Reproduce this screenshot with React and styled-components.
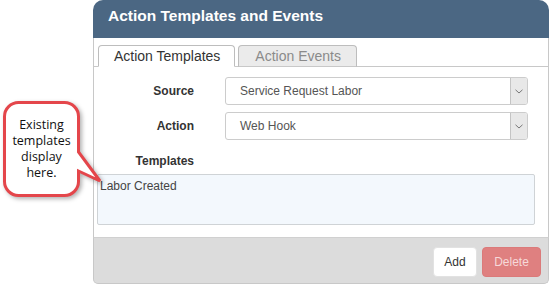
import React from "react";
import styled, { createGlobalStyle } from "styled-components";

const Global = createGlobalStyle`
  html, body { margin: 0; padding: 0; background: #ffffff; }
  body { font-family: "Liberation Sans", Arial, sans-serif; }
  * { box-sizing: border-box; }
`;

const Page = styled.div`
  position: relative;
  width: 550px;
  height: 285px;
  display: flex;
  padding-left: 93px;
  overflow: hidden;
`;

const Panel = styled.div`
  width: 456px;
  height: 284px;
  display: flex;
  flex-direction: column;
`;

const Header = styled.div`
  height: 38px;
  background: #4b6783;
  border-radius: 10px 10px 0 0;
  padding: 6px 0 0 15px;
  color: #ffffff;
  font-weight: bold;
  font-size: 15.5px;
  line-height: 20px;
`;

const Body = styled.div`
  background: #ffffff;
  border-left: 1px solid #c8c8c8;
  border-right: 1px solid #c8c8c8;
  padding-bottom: 12px;
`;

const TabRow = styled.div`
  display: flex;
  align-items: flex-end;
  gap: 3px;
  padding: 7px 0 0 4px;
  border-bottom: 1px solid #c8c8c8;
`;

const Tab = styled.div`
  height: 22px;
  margin-bottom: -1px;
  border: 1px solid #bdbdbd;
  border-bottom-color: ${(p) => (p.$active ? "#ffffff" : "#c8c8c8")};
  border-radius: 4px 4px 0 0;
  background: ${(p) => (p.$active ? "#ffffff" : "#ebebeb")};
  color: ${(p) => (p.$active ? "#333333" : "#8a8a8a")};
  font-size: 14px;
  line-height: 20px;
  padding-left: ${(p) => (p.$active ? "15px" : "16px")};
  padding-right: ${(p) => (p.$active ? "14px" : "15px")};
`;

const Form = styled.div`
  display: flex;
  flex-direction: column;
  gap: 7px;
  padding-top: 10px;
`;

const Row = styled.div`
  display: flex;
  align-items: center;
  gap: 31px;
`;

const Label = styled.div`
  width: 100px;
  text-align: right;
  font-weight: bold;
  font-size: 12px;
  color: #333333;
  line-height: 18px;
`;

const Select = styled.div`
  width: 303px;
  height: 28px;
  display: flex;
  align-items: stretch;
  border: 1px solid #cccccc;
  border-radius: 3px;
  background: #ffffff;
`;

const SelectValue = styled.div`
  flex: 1;
  padding-left: 14px;
  font-size: 12px;
  color: #555555;
  line-height: 26px;
`;

const Arrow = styled.div`
  width: 17px;
  display: flex;
  align-items: center;
  justify-content: center;
  background: #e8e8e8;
  border-left: 1px solid #c4c4c4;
  border-radius: 0 2px 2px 0;
`;

const TemplatesBlock = styled.div`
  display: flex;
  flex-direction: column;
  gap: 4px;
  margin-top: 12px;
`;

const TextArea = styled.div`
  margin-left: 3px;
  width: 438px;
  height: 51px;
  background: #f3f8fd;
  border: 1px solid #cfd3d6;
  border-radius: 2px;
  padding: 3px 2px;
  font-size: 12px;
  color: #444444;
  line-height: 16px;
`;

const Footer = styled.div`
  flex: 1;
  display: flex;
  justify-content: flex-end;
  align-items: flex-start;
  gap: 5px;
  padding: 9px 7px 0 0;
  background: #dcdcdc;
  border: 1px solid #c8c8c8;
  border-top: 1px solid #d0d0d0;
  border-radius: 0 0 5px 5px;
`;

const Button = styled.div`
  width: ${(p) => p.$w}px;
  height: 30px;
  display: flex;
  align-items: center;
  justify-content: center;
  border-radius: 4px;
  font-size: 12px;
  background: ${(p) => (p.$danger ? "#df8080" : "#ffffff")};
  color: ${(p) => (p.$danger ? "#f6d9d9" : "#333333")};
  border: 1px solid ${(p) => (p.$danger ? "#db7a7a" : "#e2e2e2")};
`;

const Callout = styled.div`
  position: absolute;
  left: 0;
  top: 0;
  width: 110px;
  height: 210px;
`;

const CalloutShape = styled.svg`
  position: absolute;
  left: 0;
  top: 0;
  filter: drop-shadow(2px 2px 2px rgba(0, 0, 0, 0.3));
`;

const CalloutText = styled.div`
  position: absolute;
  left: 4px;
  top: 102px;
  width: 75px;
  height: 94px;
  display: flex;
  align-items: center;
  justify-content: center;
  text-align: center;
  font-family: "Open Sans", "Noto Sans", sans-serif;
  font-size: 12.5px;
  line-height: 16px;
  color: #111111;
`;

const Chevron = () => (
  <svg width="8" height="5" viewBox="0 0 8 5">
    <path d="M0.5 0.8 L4 4 L7.5 0.8" fill="none" stroke="#777" strokeWidth="1" />
  </svg>
);

export default function App() {
  return (
    <>
      <Global />
      <Page>
        <Panel>
          <Header>Action Templates and Events</Header>
          <Body>
            <TabRow>
              <Tab $active>Action Templates</Tab>
              <Tab>Action Events</Tab>
            </TabRow>
            <Form>
              <Row>
                <Label>Source</Label>
                <Select>
                  <SelectValue>Service Request Labor</SelectValue>
                  <Arrow>
                    <Chevron />
                  </Arrow>
                </Select>
              </Row>
              <Row>
                <Label>Action</Label>
                <Select>
                  <SelectValue>Web Hook</SelectValue>
                  <Arrow>
                    <Chevron />
                  </Arrow>
                </Select>
              </Row>
            </Form>
            <TemplatesBlock>
              <Label>Templates</Label>
              <TextArea>Labor Created</TextArea>
            </TemplatesBlock>
          </Body>
          <Footer>
            <Button $w={44}>Add</Button>
            <Button $w={59} $danger>
              Delete
            </Button>
          </Footer>
        </Panel>
        <Callout>
          <CalloutShape width="110" height="210" viewBox="0 0 110 210">
            <path
              d="M18.5 102.5 H64.5 A14 14 0 0 1 78.5 116.5 V152 L100 181 L78.5 171 V181.5 A14 14 0 0 1 64.5 195.5 H18.5 A14 14 0 0 1 4.5 181.5 V116.5 A14 14 0 0 1 18.5 102.5 Z"
              fill="#ffffff"
              stroke="#e4464b"
              strokeWidth="3"
              strokeLinejoin="miter"
            />
          </CalloutShape>
          <CalloutText>
            Existing
            <br />
            templates
            <br />
            display
            <br />
            here.
          </CalloutText>
        </Callout>
      </Page>
    </>
  );
}
